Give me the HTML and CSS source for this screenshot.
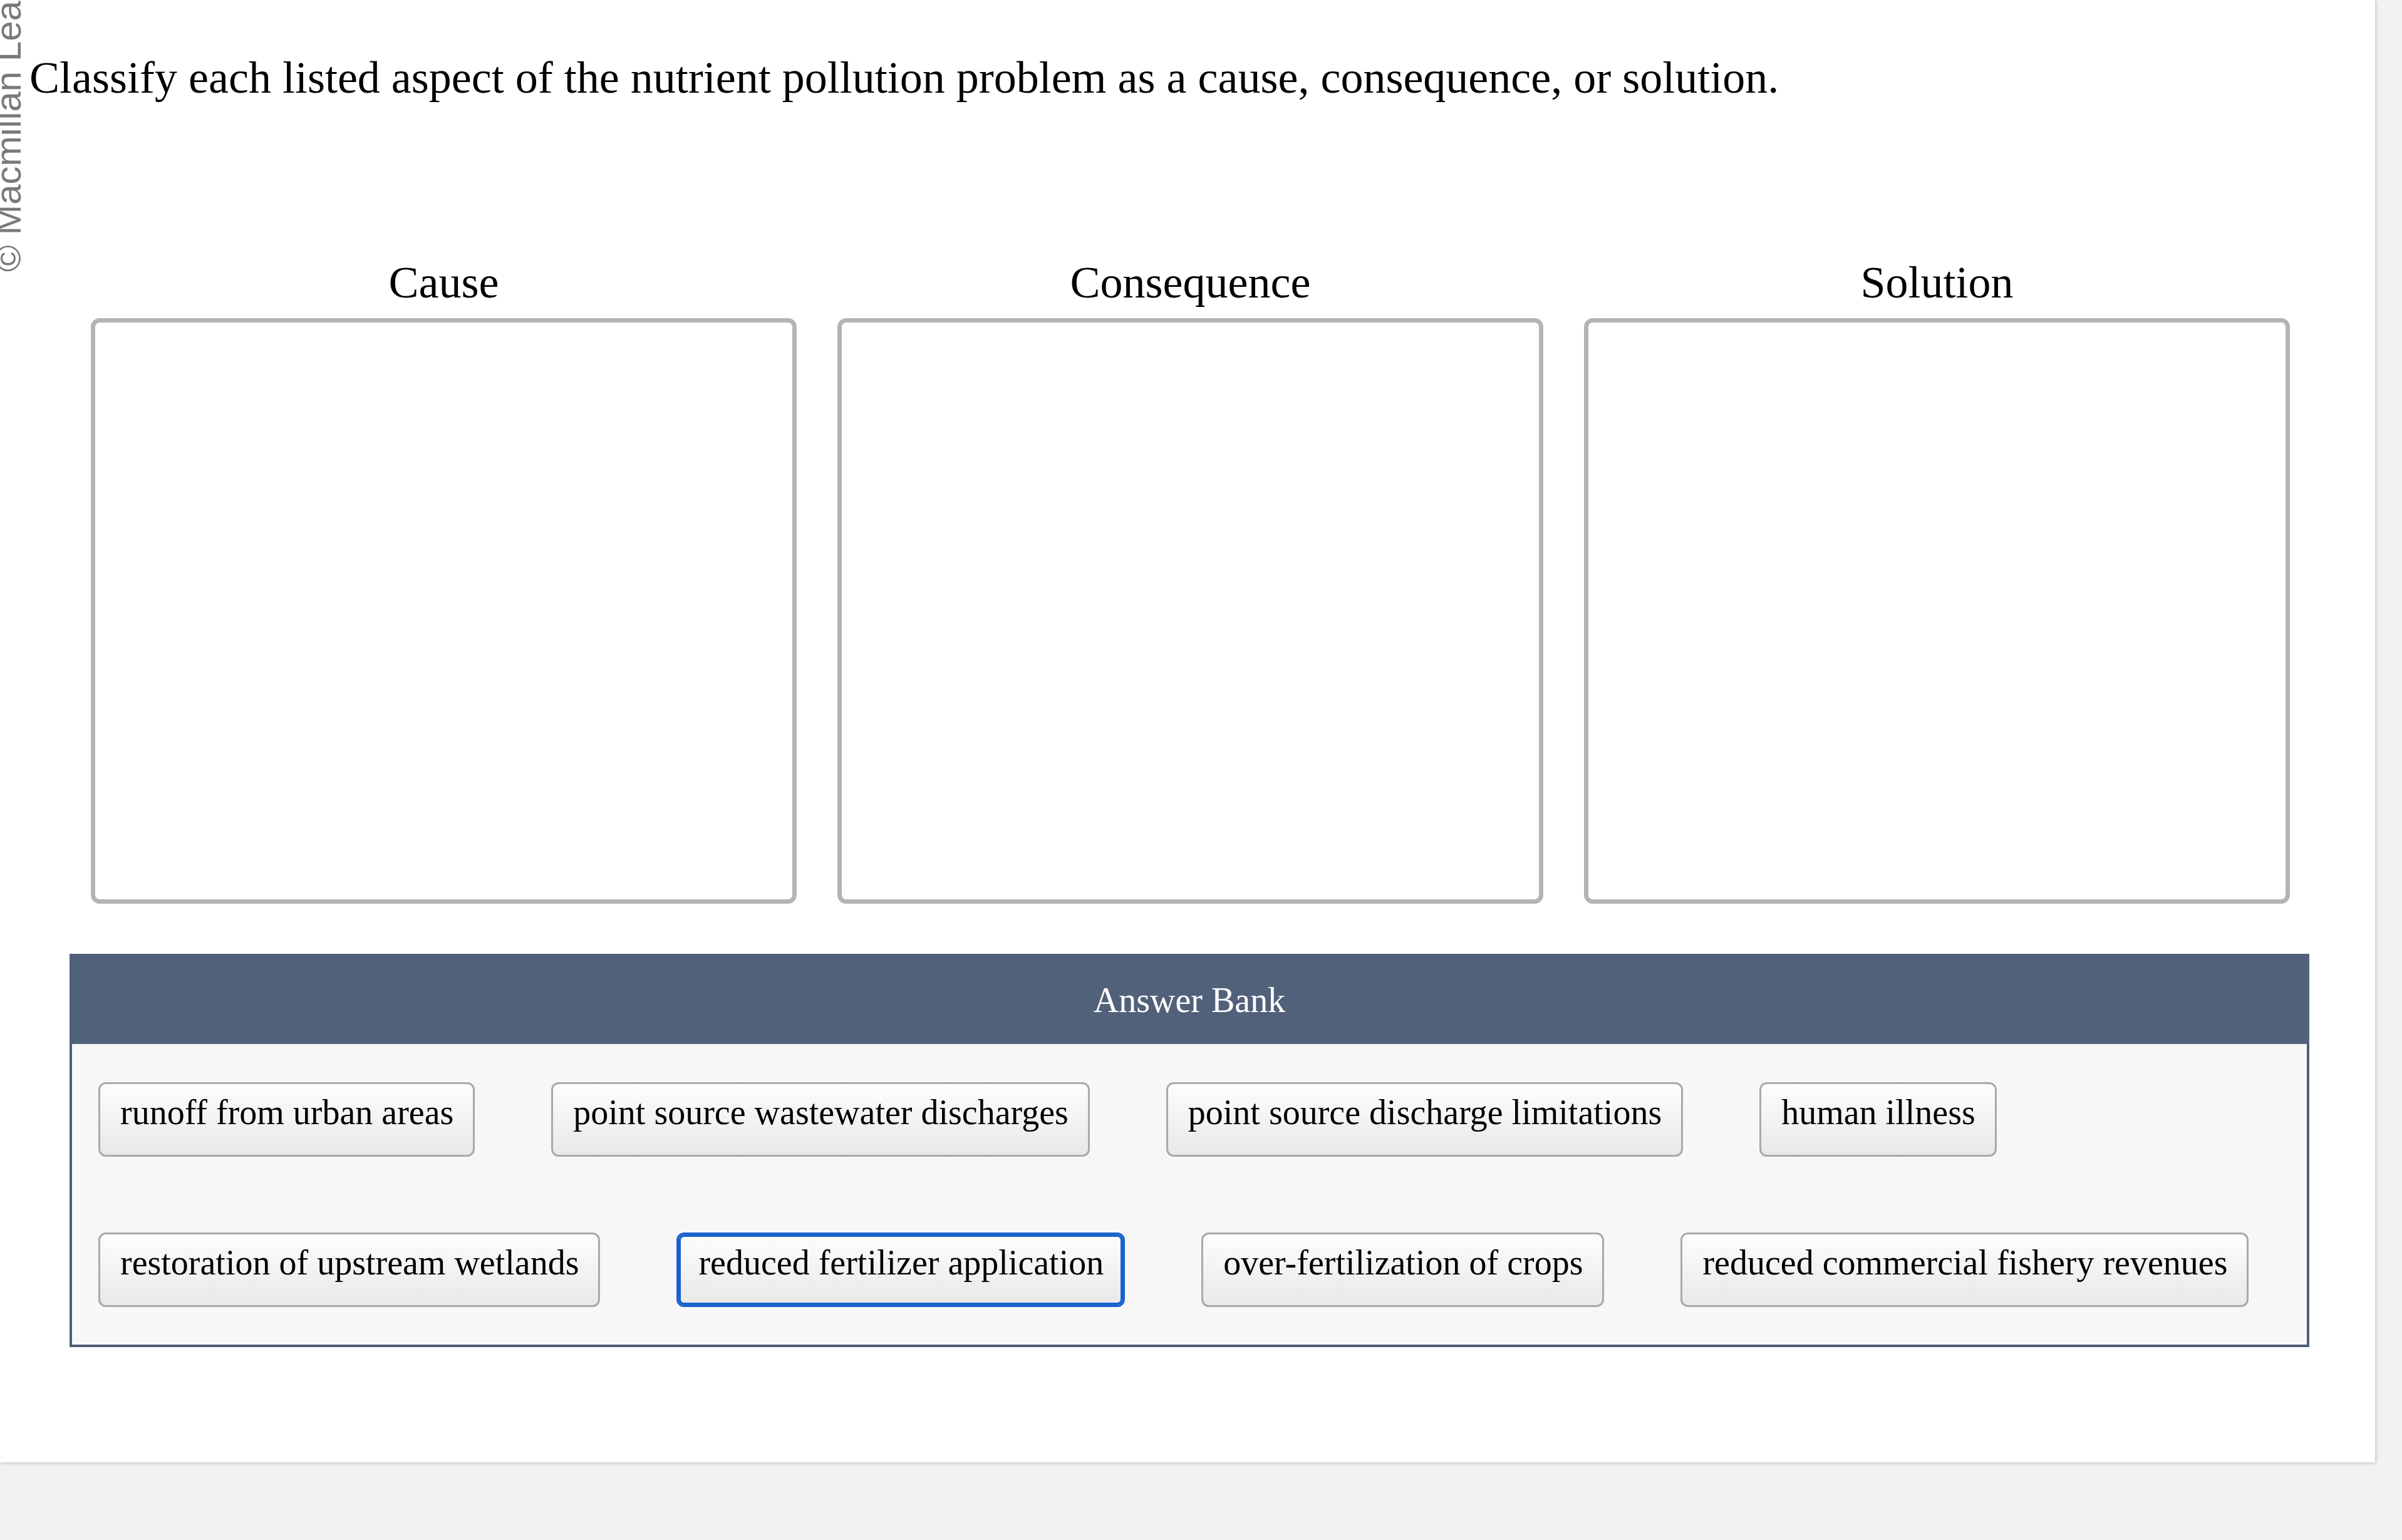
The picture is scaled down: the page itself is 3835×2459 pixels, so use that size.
FILE: index.html
```html
<!DOCTYPE html>
<html lang="en">
<head>
<meta charset="utf-8">
<title>Nutrient pollution classification</title>
<link rel="stylesheet" href="styles.css">
</head>
<body>
<div class="panel">
  <div class="watermark">© Macmillan Learning</div>
  <p class="question">Classify each listed aspect of the nutrient pollution problem as a cause, consequence, or solution.</p>
  <div class="content">
    <div class="columns">
      <div class="column">
        <div class="col-title">Cause</div>
        <div class="dropzone"></div>
      </div>
      <div class="column">
        <div class="col-title">Consequence</div>
        <div class="dropzone"></div>
      </div>
      <div class="column">
        <div class="col-title">Solution</div>
        <div class="dropzone"></div>
      </div>
    </div>
    <div class="bank">
      <div class="bank-header">Answer Bank</div>
      <div class="bank-body">
        <div class="chip">runoff from urban areas</div>
        <div class="chip">point source wastewater discharges</div>
        <div class="chip">point source discharge limitations</div>
        <div class="chip">human illness</div>
        <div class="chip">restoration of upstream wetlands</div>
        <div class="chip selected">reduced fertilizer application</div>
        <div class="chip">over-fertilization of crops</div>
        <div class="chip">reduced commercial fishery revenues</div>
      </div>
    </div>
  </div>
</div>
</body>
</html>
```

FILE: styles.css
```css
html, body {
  margin: 0;
  padding: 0;
}

body {
  background: #f2f2f2;
  width: 3835px;
  height: 2459px;
  overflow: hidden;
}

.panel {
  position: relative;
  box-sizing: border-box;
  width: 3792px;
  height: 2335px;
  padding-top: 83px;
  background: #ffffff;
  box-shadow: 1px 1px 6px rgba(0, 0, 0, 0.22);
  overflow: hidden;
  font-family: "Liberation Serif", "Times New Roman", serif;
  color: #000000;
}

.watermark {
  position: absolute;
  left: -16px;
  top: 434px;
  transform-origin: 0 0;
  transform: rotate(-90deg);
  font-family: "Liberation Sans", Arial, sans-serif;
  font-size: 58px;
  line-height: 58px;
  color: #7a7a7a;
  white-space: nowrap;
}

.question {
  margin: 0 0 0 47px;
  font-size: 72px;
  line-height: 83px;
}

.content {
  margin: 244px 0 0 111px;
  width: 3576px;
}

.columns {
  display: flex;
  gap: 65px;
  padding-left: 34px;
}

.column {
  width: 1127px;
  display: flex;
  flex-direction: column;
}

.col-title {
  font-size: 72px;
  line-height: 83px;
  text-align: center;
  margin-bottom: 15px;
}

.dropzone {
  box-sizing: border-box;
  height: 935px;
  border: 7px solid #b4b4b4;
  border-radius: 14px;
  background: #ffffff;
}

.bank {
  margin-top: 80px;
}

.bank-header {
  background: #52617a;
  color: #ffffff;
  font-size: 56px;
  line-height: 64px;
  padding: 42px 0 38px;
  text-align: center;
}

.bank-body {
  display: flex;
  flex-wrap: wrap;
  gap: 121px 122px;
  padding: 61px 42px 60px;
  background: #f7f7f7;
  border: 4px solid #4f5e77;
  border-top: 0;
}

.chip {
  font-size: 56px;
  line-height: 64px;
  padding: 13px 31px 36px 32px;
  border: 3px solid #a9a9a9;
  border-radius: 12px;
  background: linear-gradient(#fdfdfd, #e8e8e8);
  white-space: nowrap;
}

.chip.selected {
  border-color: #1862cc;
  box-shadow: inset 0 0 0 4px #1862cc;
}
```
